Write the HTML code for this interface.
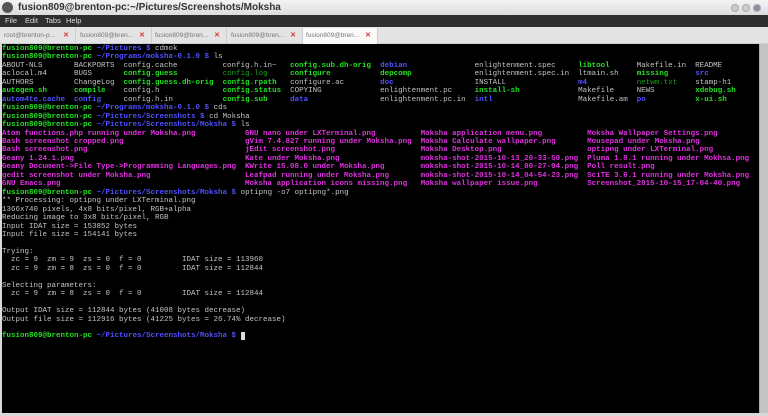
<!DOCTYPE html>
<html><head><meta charset="utf-8"><style>
*{margin:0;padding:0;box-sizing:border-box}
body{width:768px;height:416px;overflow:hidden;background:#d8d8d8;font-family:"Liberation Sans",sans-serif;position:relative}
#title{position:absolute;left:0;top:0;width:768px;height:15px;background:linear-gradient(#f4f4f4,#dcdcdc)}
#title .ic{position:absolute;left:2px;top:2px;width:11px;height:11px;border-radius:50%;background:#555}
#title .t{position:absolute;left:18px;top:0;font-size:10px;line-height:15px;color:#333;font-weight:bold}
.wb{position:absolute;top:4px;width:8px;height:8px;border-radius:50%;background:#ccc;border:1px solid #aaa}
#menu{position:absolute;left:0;top:15px;width:768px;height:12px;background:#2e2e2e;color:#ddd;font-size:7.5px;line-height:12px}
#menu span{position:absolute;top:0}
#tabs{position:absolute;left:0;top:27px;width:768px;height:17px;background:#e4e4e4;border-bottom:1px solid #ccc}
.tab{position:absolute;top:1px;height:16px;width:75px;border-right:1px solid #ccc;font-size:6.5px;line-height:16px;color:#777;padding-left:3px;white-space:nowrap}
.tab b{position:absolute;right:6px;top:0;color:#e03030;font-weight:bold;font-size:7px}
.tab.act{background:#fafafa}
#term{position:absolute;left:2px;top:44px;width:757px;height:369px;background:#000}
#sb{position:absolute;left:759px;top:44px;width:9px;height:369px;background:#c4c4c4;border-left:1px solid #aaa}
pre{position:absolute;left:0;top:1px;font-family:"Liberation Mono",monospace;font-size:7.5px;line-height:8.45px;color:#c4c4c4;white-space:pre}
.g{color:#22e022;font-weight:bold}.b{color:#5050ff;font-weight:bold}.m{color:#e030e0;font-weight:bold}.d{color:#18a018}.w{color:#d8d8d8}
.cur{background:#ddd;color:#ddd}
</style></head><body>
<div id="title"><div class="ic"></div><div class="t">fusion809@brenton-pc:~/Pictures/Screenshots/Moksha</div>
<div class="wb" style="left:731px"></div><div class="wb" style="left:742px"></div><div class="wb" style="left:753px;background:#8a8fa8"></div></div>
<div id="menu"><span style="left:5px">File</span><span style="left:25px">Edit</span><span style="left:45px">Tabs</span><span style="left:66px">Help</span></div>
<div id="tabs">
<div class="tab" style="left:1px">root@brenton-p...<b>✕</b></div>
<div class="tab" style="left:77px">fusion809@bren...<b>✕</b></div>
<div class="tab" style="left:152px">fusion809@bren...<b>✕</b></div>
<div class="tab" style="left:228px">fusion809@bren...<b>✕</b></div>
<div class="tab act" style="left:303px">fusion809@bren...<b>✕</b></div>
</div>
<div id="term"><pre><span class="g">fusion809@brenton-pc</span> <span class="b">~/Pictures $</span> cdmok
<span class="g">fusion809@brenton-pc</span> <span class="b">~/Programs/moksha-0.1.0 $</span> ls
ABOUT-NLS       BACKPORTS  config.cache          config.h.in~   <span class="g">config.sub.dh-orig</span>  <span class="b">debian</span>               enlightenment.spec     <span class="g">libtool</span>      Makefile.in  README
aclocal.m4      BUGS       <span class="g">config.guess</span>          <span class="d">config.log</span>     <span class="g">configure</span>           <span class="g">depcomp</span>              enlightenment.spec.in  ltmain.sh    <span class="g">missing</span>      <span class="b">src</span>
AUTHORS         ChangeLog  <span class="g">config.guess.dh-orig</span>  <span class="g">config.rpath</span>   configure.ac        <span class="b">doc</span>                  INSTALL                <span class="b">m4</span>           <span class="d">netwm.txt</span>    stamp-h1
<span class="g">autogen.sh</span>      <span class="g">compile</span>    config.h              <span class="g">config.status</span>  COPYING             enlightenment.pc     <span class="g">install-sh</span>             Makefile     NEWS         <span class="g">xdebug.sh</span>
<span class="b">autom4te.cache</span>  <span class="b">config</span>     config.h.in           <span class="g">config.sub</span>     <span class="b">data</span>                enlightenment.pc.in  <span class="b">intl</span>                   Makefile.am  <span class="b">po</span>           <span class="g">x-ui.sh</span>
<span class="g">fusion809@brenton-pc</span> <span class="b">~/Programs/moksha-0.1.0 $</span> cds
<span class="g">fusion809@brenton-pc</span> <span class="b">~/Pictures/Screenshots $</span> cd Moksha
<span class="g">fusion809@brenton-pc</span> <span class="b">~/Pictures/Screenshots/Moksha $</span> ls
<span class="m">Atom functions.php running under Moksha.png           GNU nano under LXTerminal.png          Moksha application menu.png          Moksha Wallpaper Settings.png
Bash screenshot cropped.png                           gVim 7.4.827 running under Moksha.png  Moksha Calculate wallpaper.png       Mousepad under Moksha.png
Bash screenshot.png                                   jEdit screenshot.png                   Moksha Desktop.png                   optipng under LXTerminal.png
Geany 1.24.1.png                                      Kate under Moksha.png                  moksha-shot-2015-10-13_20-33-50.png  Pluma 1.8.1 running under Mokhsa.png
Geany Document-&gt;File Type-&gt;Programming Languages.png  KWrite 15.08.0 under Moksha.png        moksha-shot-2015-10-14_00-27-04.png  Poll result.png
gedit screenshot under Moksha.png                     Leafpad running under Moksha.png       moksha-shot-2015-10-14_04-54-23.png  SciTE 3.6.1 running under Moksha.png
GNU Emacs.png                                         Moksha application icons missing.png   Moksha wallpaper issue.png           Screenshot_2015-10-15_17-04-40.png</span>
<span class="g">fusion809@brenton-pc</span> <span class="b">~/Pictures/Screenshots/Moksha $</span> optipng -o7 optipng*.png
** Processing: optipng under LXTerminal.png
1366x740 pixels, 4x8 bits/pixel, RGB+alpha
Reducing image to 3x8 bits/pixel, RGB
Input IDAT size = 153852 bytes
Input file size = 154141 bytes

Trying:
  zc = 9  zm = 9  zs = 0  f = 0         IDAT size = 113960
  zc = 9  zm = 8  zs = 0  f = 0         IDAT size = 112844

Selecting parameters:
  zc = 9  zm = 8  zs = 0  f = 0         IDAT size = 112844

Output IDAT size = 112844 bytes (41008 bytes decrease)
Output file size = 112916 bytes (41225 bytes = 26.74% decrease)

<span class="g">fusion809@brenton-pc</span> <span class="b">~/Pictures/Screenshots/Moksha $</span> <span class="cur"> </span></pre></div>
<div id="sb"></div>
</body></html>
